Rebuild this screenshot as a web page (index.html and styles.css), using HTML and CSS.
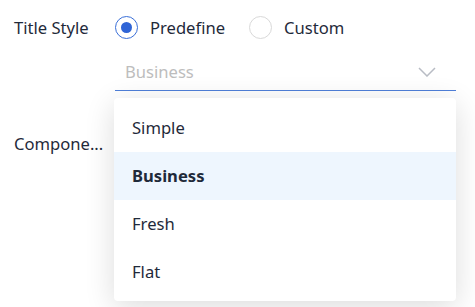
FILE: index.html
```html
<!DOCTYPE html>
<html>
<head>
<meta charset="utf-8">
<link rel="stylesheet" href="styles.css">
</head>
<body>
<div class="form">
  <div class="row row-title">
    <div class="label">Title Style</div>
    <div class="radios">
      <label class="radio checked"><span class="circle"></span><span class="rtext">Predefine</span></label>
      <label class="radio"><span class="circle"></span><span class="rtext">Custom</span></label>
    </div>
  </div>
  <div class="row row-select">
    <div class="label"></div>
    <div class="select">
      <span class="placeholder">Business</span>
      <svg class="chev" width="18" height="10" viewBox="0 0 18 10"><path d="M1 1 L9 9 L17 1" fill="none" stroke="#b8bcc4" stroke-width="1.5"/></svg>
    </div>
  </div>
  <div class="row row-comp">
    <div class="label" title="Components">Compone...</div>
  </div>
</div>
<div class="dropdown">
  <div class="item">Simple</div>
  <div class="item active">Business</div>
  <div class="item">Fresh</div>
  <div class="item">Flat</div>
</div>
</body>
</html>
```
FILE: styles.css
```css
html, body {
  margin: 0;
  padding: 0;
  background: #fff;
}
body {
  font-family: "Noto Sans", "Open Sans", sans-serif;
  font-size: 16.6px;
  color: #1f2a3a;
  width: 475px;
  height: 307px;
  overflow: hidden;
  position: relative;
}
.form {
  padding-left: 14px;
}
.row {
  display: flex;
  align-items: center;
}
.label {
  width: 101px;
  flex: none;
  white-space: nowrap;
}
.row-title {
  height: 54px;
}
.radios {
  display: flex;
  align-items: center;
  gap: 24px;
}
.radio {
  display: flex;
  align-items: center;
  gap: 12px;
}
.circle {
  width: 21px;
  height: 21px;
  border: 1.5px solid #d9d9d9;
  border-radius: 50%;
  position: relative;
  box-sizing: content-box;
}
.radio.checked .circle {
  border-color: #3a6fd8;
}
.radio.checked .circle::after {
  content: "";
  position: absolute;
  left: 5px;
  top: 5px;
  width: 11px;
  height: 11px;
  border-radius: 50%;
  background: #2f64d6;
}
.row-select {
  height: 37px;
  align-items: stretch;
}
.select {
  width: 341px;
  border-bottom: 1px solid #4f7fd9;
  display: flex;
  align-items: center;
  justify-content: space-between;
  padding-left: 10px;
  padding-right: 20px;
  padding-bottom: 1px;
  box-sizing: border-box;
}
.placeholder {
  color: #bdbdbd;
}
.chev {
  display: block;
}
.row-comp {
  height: 104px;
}
.dropdown {
  position: absolute;
  left: 114px;
  top: 98px;
  width: 342px;
  padding: 6px 0 5px;
  background: #fff;
  border-radius: 4px;
  box-shadow: 0 6px 30px rgba(0, 0, 0, 0.14);
}
.item {
  height: 48px;
  line-height: 48px;
  padding-left: 18px;
}
.item.active {
  background: #eef6fe;
  font-weight: bold;
}
```
